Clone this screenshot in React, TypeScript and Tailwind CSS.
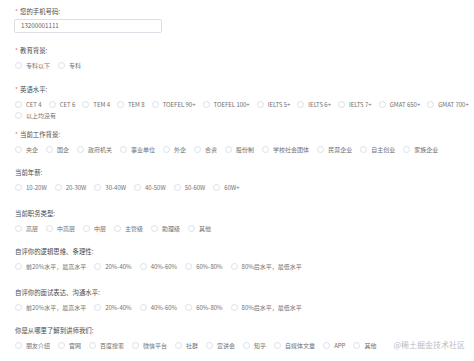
const font = { fontFamily: '"Noto Sans CJK SC", "Noto Sans", sans-serif' };

interface Section {
  label: string;
  required?: boolean;
  rows: string[][];
  mt: string;
  tight?: boolean;
}

const sections: Section[] = [
  { label: "教育背景:", required: true, rows: [["专科以下", "专科"]], mt: "mt-[13px]" },
  {
    label: "英语水平:",
    required: true,
    rows: [
      ["CET 4", "CET 6", "TEM 4", "TEM 8", "TOEFEL 90+", "TOEFEL 100+", "IELTS 5+", "IELTS 6+", "IELTS 7+", "GMAT 650+", "GMAT 700+"],
      ["以上均没有"],
    ],
    mt: "mt-[14px]",
    tight: true,
  },
  {
    label: "当前工作背景:",
    required: true,
    rows: [["央企", "国企", "政府机关", "事业单位", "外企", "合资", "股份制", "学校社会团体", "民营企业", "自主创业", "家族企业"]],
    mt: "mt-[9px]",
  },
  { label: "当前年薪:", rows: [["10-20W", "20-30W", "30-40W", "40-50W", "50-60W", "60W+"]], mt: "mt-[13px]" },
  { label: "当前职务类型:", rows: [["高层", "中高层", "中层", "主管级", "助理级", "其他"]], mt: "mt-[16px]" },
  {
    label: "自评你的逻辑思维、条理性:",
    rows: [["前20%水平，最高水平", "20%-40%", "40%-60%", "60%-80%", "80%后水平，最低水平"]],
    mt: "mt-[13px]",
  },
  {
    label: "自评你的面试表达、沟通水平:",
    rows: [["前20%水平，最高水平", "20%-40%", "40%-60%", "60%-80%", "80%后水平，最低水平"]],
    mt: "mt-[16px]",
  },
  {
    label: "你是从哪里了解到讲师我们:",
    rows: [["朋友介绍", "官网", "百度搜索", "微信平台", "社群", "宣讲会", "知乎", "自媒体文章", "APP", "其他"]],
    mt: "mt-[13px]",
  },
];

function Label({ text, required }: { text: string; required?: boolean }) {
  return (
    <div className="flex h-[10px] items-center whitespace-nowrap text-[6.4px] leading-[10px] text-[#4a4a4a]">
      {required && <span className="mr-[2px] text-[#f56c6c]">*</span>}
      {text}
    </div>
  );
}

function Radio({ text, tight }: { text: string; tight?: boolean }) {
  return (
    <div className={`${tight ? "mr-[7px]" : "mr-[8px]"} flex shrink-0 items-center whitespace-nowrap`}>
      <span className="h-[7px] w-[7px] rounded-full border border-[#dcdfe6] bg-white" />
      <span className="ml-[4px] text-[6px] text-[#707070]">{text}</span>
    </div>
  );
}

export default function App() {
  return (
    <div className="relative h-[361px] w-[474px] overflow-hidden bg-white pl-[15px]" style={font}>
      <div className="pt-[7px]">
        <Label text="您的手机号码:" required />
        <div className="ml-[-1px] mt-[2px] flex h-[14px] w-[148px] items-center rounded-[2px] border border-[#dcdfe6] px-[6px] text-[6.2px] text-[#606266]">
          13200001111
        </div>
      </div>
      {sections.map((s) => (
        <div key={s.label} className={s.mt}>
          <Label text={s.label} required={s.required} />
          <div className="mt-[4px]">
            {s.rows.map((row, i) => (
              <div key={i} className="flex h-[11px] items-center">
                {row.map((o) => (
                  <Radio key={o} text={o} tight={s.tight} />
                ))}
              </div>
            ))}
          </div>
        </div>
      ))}
      <div className="absolute bottom-[10px] right-[9px] text-[8px] text-[#b9bcc2]">@稀土掘金技术社区</div>
    </div>
  );
}
